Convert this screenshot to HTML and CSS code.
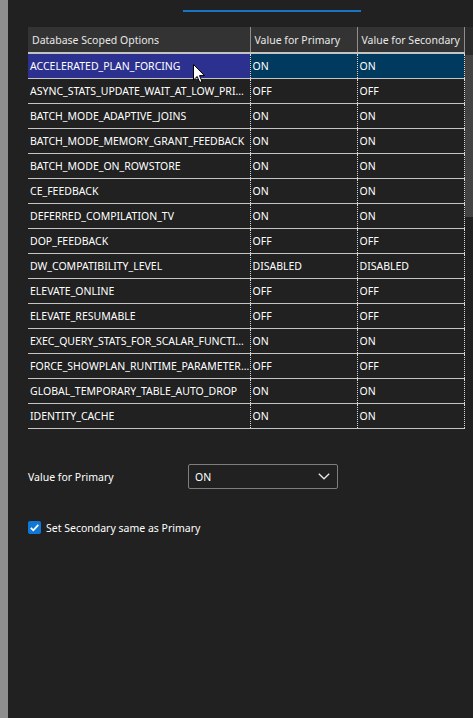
FILE: index.html
```html
<!DOCTYPE html>
<html>
<head>
<meta charset="utf-8">
<link rel="stylesheet" href="styles.css">
</head>
<body>
<div class="sidebar"></div>
<main class="main">
  <div class="tabbar"><div class="tab-indicator"></div></div>
  <div class="grid-wrap">
    <table class="grid">
      <colgroup><col class="c1"><col class="c2"><col class="c3"></colgroup>
      <thead>
        <tr><th>Database Scoped Options</th><th>Value for Primary</th><th>Value for Secondary</th></tr>
      </thead>
      <tbody>
        <tr class="selected"><td>ACCELERATED_PLAN_FORCING</td><td>ON</td><td>ON</td></tr>
        <tr><td>ASYNC_STATS_UPDATE_WAIT_AT_LOW_PRIORITY</td><td>OFF</td><td>OFF</td></tr>
        <tr><td>BATCH_MODE_ADAPTIVE_JOINS</td><td>ON</td><td>ON</td></tr>
        <tr><td>BATCH_MODE_MEMORY_GRANT_FEEDBACK</td><td>ON</td><td>ON</td></tr>
        <tr><td>BATCH_MODE_ON_ROWSTORE</td><td>ON</td><td>ON</td></tr>
        <tr><td>CE_FEEDBACK</td><td>ON</td><td>ON</td></tr>
        <tr><td>DEFERRED_COMPILATION_TV</td><td>ON</td><td>ON</td></tr>
        <tr><td>DOP_FEEDBACK</td><td>OFF</td><td>OFF</td></tr>
        <tr><td>DW_COMPATIBILITY_LEVEL</td><td>DISABLED</td><td>DISABLED</td></tr>
        <tr><td>ELEVATE_ONLINE</td><td>OFF</td><td>OFF</td></tr>
        <tr><td>ELEVATE_RESUMABLE</td><td>OFF</td><td>OFF</td></tr>
        <tr><td>EXEC_QUERY_STATS_FOR_SCALAR_FUNCTIONS</td><td>ON</td><td>ON</td></tr>
        <tr><td>FORCE_SHOWPLAN_RUNTIME_PARAMETER_COLLECTION</td><td>OFF</td><td>OFF</td></tr>
        <tr><td>GLOBAL_TEMPORARY_TABLE_AUTO_DROP</td><td>ON</td><td>ON</td></tr>
        <tr><td>IDENTITY_CACHE</td><td>ON</td><td>ON</td></tr>
      </tbody>
    </table>
    <div class="scrollbar">
      <div class="scroll-head"></div>
      <div class="scroll-thumb"></div>
    </div>
  </div>

  <div class="field">
    <span class="field-label">Value for Primary</span>
    <div class="select">
      <span>ON</span>
      <svg class="chevron" width="12" height="7" viewBox="0 0 12 7"><path d="M0.8 0.8 L6 5.8 L11.2 0.8" fill="none" stroke="#e6e6e6" stroke-width="1.3"/></svg>
    </div>
  </div>

  <label class="check">
    <span class="box"><svg width="13" height="13" viewBox="0 0 13 13"><path d="M2.8 6.8 L5.3 9.3 L10.3 3.8" fill="none" stroke="#fff" stroke-width="1.8"/></svg></span>
    <span>Set Secondary same as Primary</span>
  </label>
</main>
<svg class="cursor" width="13" height="20" viewBox="0 0 13 20"><path d="M0.5 0.5 L0.5 16 L4.2 12.5 L6.8 18.5 L9 17.5 L6.5 11.6 L11.5 11.6 Z" fill="#fff" stroke="#000" stroke-width="1"/></svg>
</body>
</html>
```

FILE: styles.css
```css
* { box-sizing: border-box; }
html, body { margin: 0; padding: 0; }
body {
  background: #212121;
  color: #ffffff;
  font-family: "Noto Sans", "Open Sans", sans-serif;
  font-size: 10.5px;
  display: flex;
  min-height: 100vh;
  position: relative;
}
.sidebar {
  width: 8px;
  flex: none;
  background: #8e8e8e;
}
.main {
  flex: 1;
  min-width: 0;
}
.tabbar {
  height: 27px;
  padding-top: 10px;
  padding-left: 175px;
}
.tab-indicator {
  width: 178px;
  height: 2px;
  background: #1a73c6;
}
.grid-wrap {
  display: flex;
  margin-left: 20px;
}
.grid {
  width: 436px;
  flex: none;
  table-layout: fixed;
  border-collapse: collapse;
}
.c1 { width: 222px; }
.c2 { width: 107px; }
.c3 { width: 107px; }
.grid th {
  height: 26px;
  background: #333333;
  color: #e8e8e8;
  font-weight: normal;
  text-align: left;
  padding: 0 0 0 4px;
  border-bottom: 2px solid #c4c4c4;
  border-right: 1px solid #8f8f8f;
  white-space: nowrap;
  overflow: hidden;
}
.grid td {
  height: 25px;
  padding: 0 0 0 2px;
  border-bottom: 1px solid #c4c4c4;
  border-right: 1px dotted #dcdcdc;
  white-space: nowrap;
  overflow: hidden;
  text-overflow: ellipsis;
}
.grid tr.selected td { background: #003a5e; }
.grid tr.selected td:first-child { background: #2c3190; }
.scrollbar {
  width: 9px;
  flex: none;
  display: flex;
  flex-direction: column;
}
.scroll-head {
  height: 28px;
  background: #2b2b2b;
}
.scroll-thumb {
  height: 162px;
  background: #434343;
}
.field {
  display: flex;
  align-items: center;
  margin-top: 35px;
  padding-left: 20px;
}
.field-label {
  width: 160px;
  flex: none;
  padding-top: 1px;
}
.select {
  width: 150px;
  height: 25px;
  border: 1px solid #7e7e7e;
  border-radius: 2px;
  display: flex;
  align-items: center;
  justify-content: space-between;
  padding: 1px 7px 0 6px;
}
.chevron { display: block; }
.check {
  display: flex;
  align-items: center;
  gap: 5px;
  margin-top: 32px;
  padding-left: 20px;
}
.box {
  width: 13px;
  height: 13px;
  background: #0f78d6;
  border-radius: 2px;
  display: block;
}
.box svg { display: block; }
.cursor {
  position: absolute;
  left: 193px;
  top: 64px;
}
```
